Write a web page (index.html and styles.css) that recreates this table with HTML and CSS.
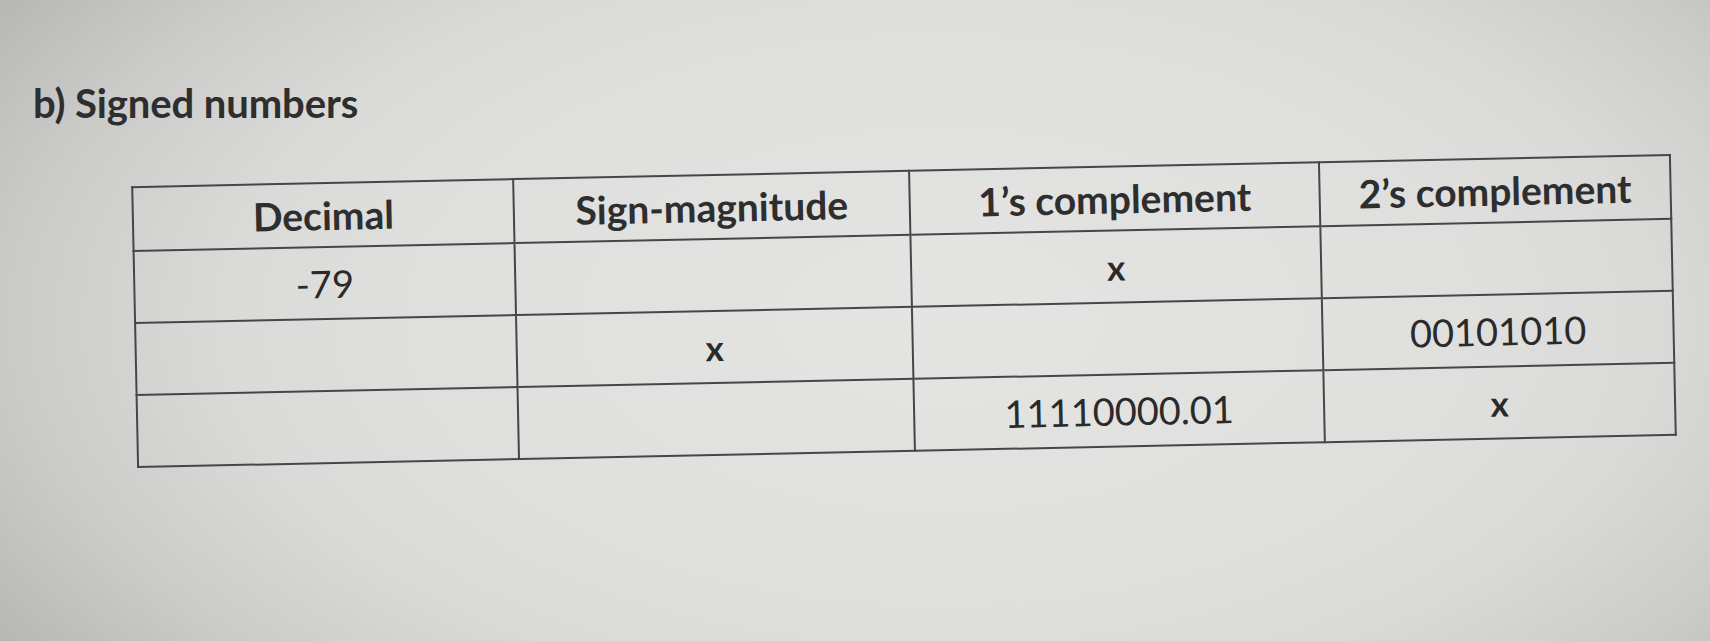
FILE: index.html
```html
<!DOCTYPE html>
<html lang="en">
<head>
<meta charset="utf-8">
<title>Signed numbers</title>
<link rel="stylesheet" href="styles.css">
</head>
<body>
<div class="page">
  <h2 class="title">b) Signed numbers</h2>
  <div class="table-wrap">
    <table class="grid">
      <colgroup>
        <col class="c1"><col class="c2"><col class="c3"><col class="c4">
      </colgroup>
      <thead>
        <tr class="head">
          <th>Decimal</th>
          <th>Sign-magnitude</th>
          <th>1’s complement</th>
          <th>2’s complement</th>
        </tr>
      </thead>
      <tbody>
        <tr class="r1">
          <td>-79</td>
          <td></td>
          <td class="mark">x</td>
          <td></td>
        </tr>
        <tr class="r2">
          <td></td>
          <td class="mark">x</td>
          <td></td>
          <td>00101010</td>
        </tr>
        <tr class="r3">
          <td></td>
          <td></td>
          <td>11110000.01</td>
          <td class="mark">x</td>
        </tr>
      </tbody>
    </table>
  </div>
</div>
</body>
</html>
```

FILE: styles.css
```css
html, body {
  margin: 0;
  padding: 0;
}

body {
  width: 1710px;
  height: 641px;
  overflow: hidden;
  font-family: Lato, "Open Sans", sans-serif;
  color: #2a2a2a;
  background: radial-gradient(ellipse 1050px 560px at 55% 50%, #e4e4e3 0%, #dfdfde 50%, #dadad9 68%, #cbcbc9 88%, #b5b5b3 108%);
}

.page {
  padding: 80px 0 0 33px;
}

.title {
  margin: 0;
  font-size: 40px;
  line-height: 46px;
  font-weight: 700;
  color: #2e2e2e;
  letter-spacing: -0.1px;
}

.table-wrap {
  margin: 44px 0 0 101px;
  width: 1538px;
  transform: rotate(-1.2deg);
  transform-origin: 50% 50%;
}

.grid {
  width: 1538px;
  border-collapse: collapse;
  table-layout: fixed;
  font-size: 38px;
}

.c1 { width: 381px; }
.c2 { width: 396px; }
.c3 { width: 410px; }
.c4 { width: 351px; }

.grid th,
.grid td {
  border: 2px solid #464646;
  text-align: center;
  vertical-align: middle;
  padding: 0;
  line-height: 46px;
}

.grid th {
  font-size: 39px;
  font-weight: 700;
  color: #2e2e2e;
}

.grid td {
  font-weight: 400;
  color: #2a2a2a;
}

.grid td.mark {
  font-weight: 700;
  font-size: 35px;
}

.head th { height: 62px; }
.r1 td { height: 70px; }
.r2 td { height: 70px; }
.r3 td { height: 70px; }
```
